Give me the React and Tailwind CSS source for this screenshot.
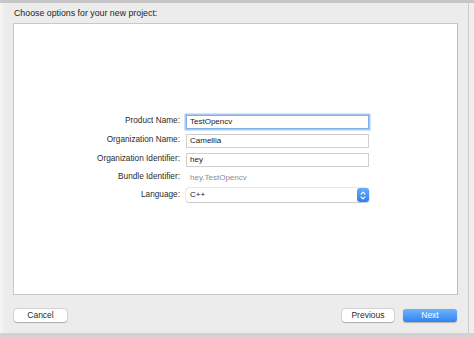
import React from 'react';

const font = { fontFamily: '"Liberation Sans", Arial, sans-serif' };

const Field = ({ value, focused }) => (
  <div
    className={
      'h-[14px] w-[183px] bg-white border flex items-center pl-[3px] text-[8px] text-[#222] ' +
      (focused ? 'border-[#7fb0ee] ring-[1.5px] ring-[#a8c9f3]' : 'border-[#cfcfcf]')
    }
  >
    {value}
  </div>
);

const Row = ({ label, h, children }) => (
  <div className={'flex items-center ' + h}>
    <div className="w-[172px] pr-[6px] text-right text-[8.25px] text-[#2b2b2b] whitespace-nowrap">{label}</div>
    {children}
  </div>
);

const Button = ({ children, w, primary }) => (
  <button
    className={
      'h-[13px] rounded-[3px] text-[8.5px] leading-none flex items-center justify-center ' +
      w +
      (primary
        ? ' bg-gradient-to-b from-[#6eb2fb] to-[#2d84f3] text-white shadow-[0_0.5px_1px_rgba(0,0,0,0.25)]'
        : ' bg-white text-[#2b2b2b] shadow-[0_0_0_0.5px_rgba(0,0,0,0.18),0_0.5px_1px_rgba(0,0,0,0.2)]')
    }
  >
    {children}
  </button>
);

export default function App() {
  return (
    <div className="w-[474px] h-[337px] bg-[#ececec] flex flex-col overflow-hidden" style={font}>
      <div className="h-[3px] bg-[#c6c6c6]" />
      <div className="flex flex-1">
        <div className="w-[3px] bg-[#f3f3f3]" />
        <div className="w-[466px] border-r border-[#c9c9c9] flex flex-col">
          <div className="pl-[11px] pt-[5px] h-[20px] text-[8.8px] leading-[11px] text-[#1e1e1e]">
            Choose options for your new project:
          </div>
          <div className="ml-[10px] w-[445px] h-[272px] bg-white border border-[#c8c8c8] border-r-[#bdbdbd] pt-[88px]">
            <Row label="Product Name:" h="h-[19px]">
              <Field value="TestOpencv" focused />
            </Row>
            <Row label="Organization Name:" h="h-[19px]">
              <Field value="Camellia" />
            </Row>
            <Row label="Organization Identifier:" h="h-[19px]">
              <Field value="hey" />
            </Row>
            <Row label="Bundle Identifier:" h="h-[17px]">
              <div className="pl-[4px] text-[8px] text-[#8c8c8c]">hey.TestOpencv</div>
            </Row>
            <Row label="Language:" h="h-[18px]">
              <div className="h-[14px] w-[183px] bg-white rounded-[3px] shadow-[0_0_0_0.5px_rgba(0,0,0,0.15),0_0.5px_1px_rgba(0,0,0,0.15)] flex items-center justify-between pl-[4px]">
                <span className="text-[8px] text-[#222]">C++</span>
                <div className="w-[12px] h-[14px] rounded-[3px] bg-gradient-to-b from-[#67aaf8] to-[#2c7ff0] flex items-center justify-center">
                  <svg width="6" height="9" viewBox="0 0 6 9" fill="none" stroke="white" strokeWidth="1.1" strokeLinecap="round" strokeLinejoin="round">
                    <path d="M1 3.2 L3 1.2 L5 3.2" />
                    <path d="M1 5.8 L3 7.8 L5 5.8" />
                  </svg>
                </div>
              </div>
            </Row>
          </div>
          <div className="flex items-center pl-[11px] pt-[14px]">
            <Button w="w-[53px]">Cancel</Button>
            <div className="flex-1" />
            <Button w="w-[52px]">Previous</Button>
            <div className="w-[9px]" />
            <Button w="w-[54px]" primary>Next</Button>
            <div className="w-[11px]" />
          </div>
        </div>
        <div className="flex-1 bg-[#efefef]" />
      </div>
      <div className="h-[4px] bg-[#d2d2d2]" />
    </div>
  );
}
